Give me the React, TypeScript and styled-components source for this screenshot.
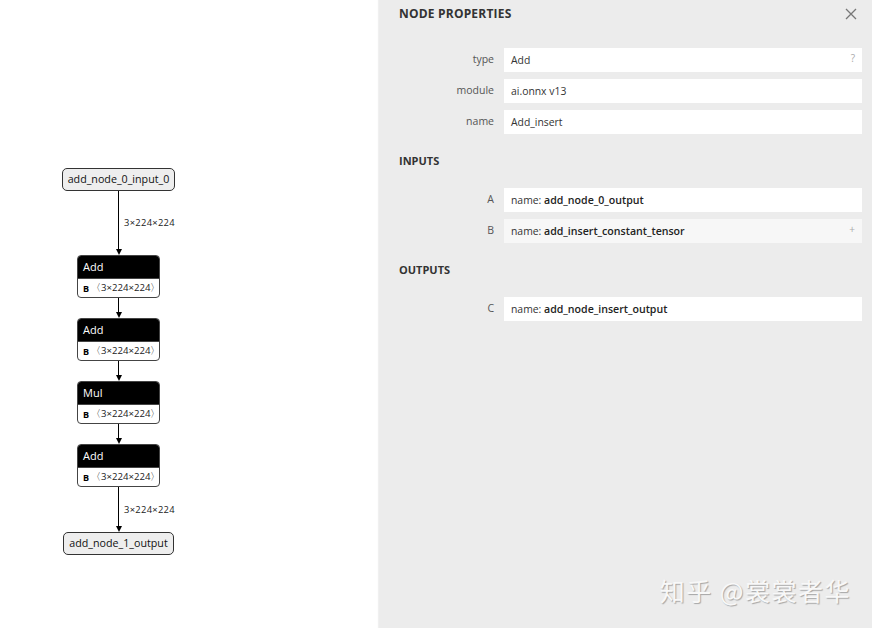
import React from 'react'
import styled, { createGlobalStyle } from 'styled-components'

const GlobalStyle = createGlobalStyle`
  html, body, #root {
    margin: 0;
    padding: 0;
    height: 100%;
  }
  body {
    background: #fff;
    font-family: "Open Sans", "Noto Sans", sans-serif;
    overflow: hidden;
  }
`

interface Op {
  type: string
}

const ops: Op[] = [{ type: 'Add' }, { type: 'Add' }, { type: 'Mul' }, { type: 'Add' }]

interface Prop {
  label: string
  value: React.ReactNode
  hint?: string
  muted?: boolean
}

const attributes: Prop[] = [
  { label: 'type', value: 'Add', hint: '?' },
  { label: 'module', value: 'ai.onnx v13' },
  { label: 'name', value: 'Add_insert' },
]

const inputs: Prop[] = [
  { label: 'A', value: 'add_node_0_output' },
  { label: 'B', value: 'add_insert_constant_tensor', hint: '+', muted: true },
]

const outputs: Prop[] = [{ label: 'C', value: 'add_node_insert_output' }]

const Edge: React.FC<{ length: number; label?: string }> = ({ length, label }) => (
  <EdgeWrap style={{ height: length }}>
    <EdgeLine />
    <Arrow />
    {label && <EdgeLabel>{label}</EdgeLabel>}
  </EdgeWrap>
)

const PropRow: React.FC<{ prop: Prop; named?: boolean }> = ({ prop, named }) => (
  <Row>
    <Label>{prop.label}</Label>
    <Value $muted={prop.muted}>
      {named ? (
        <>
          name: <b>{prop.value}</b>
        </>
      ) : (
        prop.value
      )}
      {prop.hint && <Hint>{prop.hint}</Hint>}
    </Value>
  </Row>
)

const App: React.FC = () => {
  return (
    <>
      <GlobalStyle />
      <Page>
        <Canvas>
          <Graph>
            <IoNode>add_node_0_input_0</IoNode>
            <Edge length={64} label="3×224×224" />
            {ops.map((op, i) => (
              <React.Fragment key={i}>
                <OpNode>
                  <OpHead>{op.type}</OpHead>
                  <OpBody>
                    <b>B</b>
                    <Shape>〈3×224×224〉</Shape>
                  </OpBody>
                </OpNode>
                {i < ops.length - 1 && <Edge length={20} />}
              </React.Fragment>
            ))}
            <Edge length={45} label="3×224×224" />
            <IoNode>add_node_1_output</IoNode>
          </Graph>
        </Canvas>

        <Panel>
          <PanelHeader>
            <Title>NODE PROPERTIES</Title>
            <Close>
              <svg width="12" height="12" viewBox="0 0 12 12">
                <path d="M1 1 L11 11 M11 1 L1 11" stroke="#777" strokeWidth="1.3" />
              </svg>
            </Close>
          </PanelHeader>
          <Rows>
            {attributes.map((p) => (
              <PropRow key={p.label} prop={p} />
            ))}
          </Rows>
          <SectionTitle>INPUTS</SectionTitle>
          <Rows>
            {inputs.map((p) => (
              <PropRow key={p.label} prop={p} named />
            ))}
          </Rows>
          <SectionTitle>OUTPUTS</SectionTitle>
          <Rows>
            {outputs.map((p) => (
              <PropRow key={p.label} prop={p} named />
            ))}
          </Rows>
          <Watermark>知乎 @裳裳者华</Watermark>
        </Panel>
      </Page>
    </>
  )
}

export default App

const Page = styled.div`
  display: flex;
  height: 100%;
`

const Canvas = styled.div`
  flex: 1;
  padding-top: 168px;
  padding-left: 62px;
`

const Graph = styled.div`
  display: flex;
  flex-direction: column;
  align-items: center;
  width: 113px;
`

const IoNode = styled.div`
  box-sizing: border-box;
  height: 23px;
  padding: 0 5px;
  line-height: 21px;
  border: 1px solid #333;
  border-radius: 5px;
  background: #eee;
  font-size: 10.7px;
  color: #111;
  white-space: nowrap;
`

const OpNode = styled.div`
  box-sizing: border-box;
  width: 83px;
  height: 43px;
  border: 1px solid #444;
  border-radius: 4px;
  overflow: hidden;
  display: flex;
  flex-direction: column;
  background: #fff;
`

const OpHead = styled.div`
  height: 22px;
  line-height: 22px;
  background: #000;
  color: #fff;
  font-size: 11px;
  padding-left: 5px;
`

const OpBody = styled.div`
  flex: 1;
  display: flex;
  align-items: center;
  padding-left: 5px;
  font-size: 9px;
  color: #000;
  border-top: 1px solid #444;
`

const Shape = styled.span`
  margin-left: 2px;
  font-size: 9.6px;
  color: #222;
`

const EdgeWrap = styled.div`
  position: relative;
  width: 9px;
  display: flex;
  flex-direction: column;
  align-items: center;
`

const EdgeLine = styled.div`
  flex: 1;
  width: 1px;
  background: #000;
`

const Arrow = styled.div`
  width: 0;
  height: 0;
  border-left: 3px solid transparent;
  border-right: 3px solid transparent;
  border-top: 6px solid #000;
`

const EdgeLabel = styled.div`
  position: absolute;
  left: 10px;
  top: 50%;
  transform: translateY(-55%);
  font-size: 9.4px;
  letter-spacing: 0.3px;
  color: #222;
  white-space: nowrap;
`

const Panel = styled.div`
  position: relative;
  width: 493px;
  height: 100%;
  background: #ececec;
  box-shadow: -1px 0 1px rgba(0, 0, 0, 0.06);
  padding: 0 10px 0 20px;
  box-sizing: border-box;
`

const PanelHeader = styled.div`
  display: flex;
  align-items: center;
  justify-content: space-between;
  height: 27px;
  margin-bottom: 21px;
`

const Title = styled.div`
  font-size: 12px;
  font-weight: 700;
  color: #333;
  letter-spacing: 0.2px;
`

const Close = styled.div`
  display: flex;
  margin-right: 5px;
  margin-top: 1px;
`

const Rows = styled.div`
  display: flex;
  flex-direction: column;
  gap: 7px;
`

const Row = styled.div`
  display: flex;
  align-items: center;
  gap: 10px;
`

const Label = styled.div`
  width: 95px;
  text-align: right;
  font-size: 10.5px;
  color: #555;
  margin-top: -2px;
`

const Value = styled.div<{ $muted?: boolean }>`
  flex: 1;
  position: relative;
  height: 24px;
  line-height: 25px;
  padding-left: 7px;
  background: ${(p) => (p.$muted ? '#f7f7f7' : '#fff')};
  font-size: 10.4px;
  color: #333;
  b {
    color: #222;
    font-weight: 600;
    font-size: 10.6px;
  }
`

const Hint = styled.span`
  position: absolute;
  right: 7px;
  top: -2px;
  color: #aaa;
  font-size: 10px;
`

const SectionTitle = styled.div`
  height: 54px;
  line-height: 54px;
  font-size: 11px;
  font-weight: 700;
  color: #333;
`

const Watermark = styled.div`
  position: absolute;
  right: 21px;
  bottom: 20px;
  font-family: "Noto Sans CJK SC", sans-serif;
  font-size: 25px;
  letter-spacing: 1.5px;
  color: #f8f8f8;
  text-shadow: 1px 1px 1px rgba(0, 0, 0, 0.3);
`
